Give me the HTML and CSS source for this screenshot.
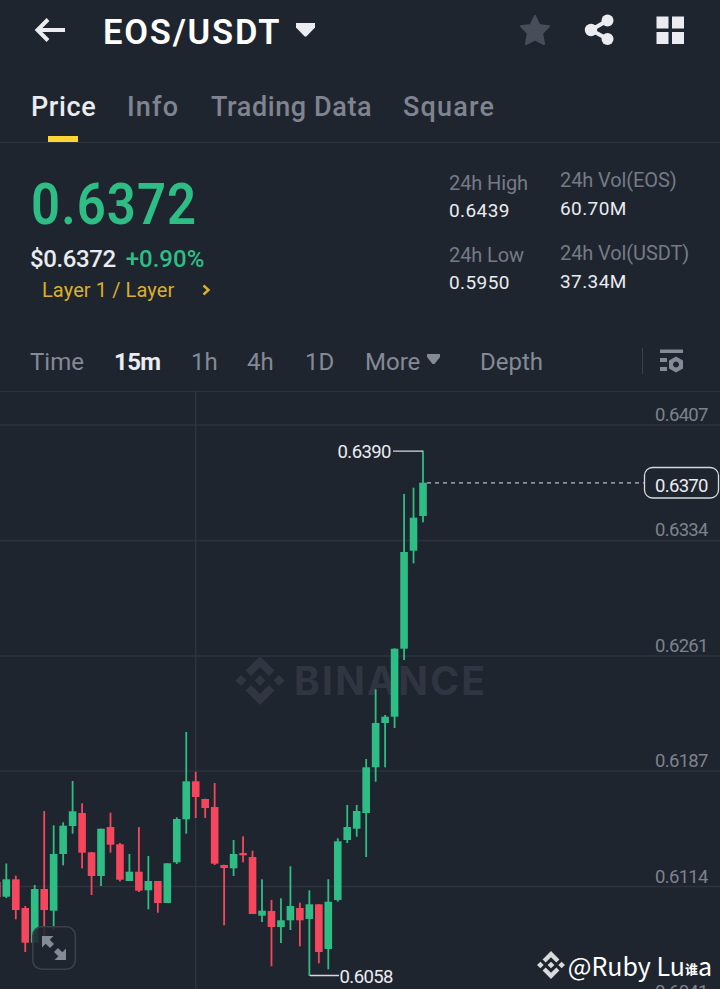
FILE: index.html
```
<!DOCTYPE html>
<html lang="en">
<head>
  <meta charset="UTF-8" />
  <meta name="viewport" content="width=device-width, initial-scale=1.0" />
  <title>EOS/USDT</title>
  <link rel="stylesheet" href="styles.css">
</head>
<body>
  <header class="topbar">
    <svg class="back" width="32" height="26" viewBox="0 0 32 26">
      <path d="M14 2.500L3.500 13L14 23.500M3.500 13H31" fill="none" stroke="#eaecef" stroke-width="4" />
    </svg>
    <h1>EOS/USDT</h1>
    <svg class="caret" width="19" height="15" viewBox="0 0 19 15">
      <path d="M0 0H19V4.500L10.300 13.500H8.700L0 4.500Z" fill="#eaecf2" />
    </svg>
    <div class="actions">
      <svg width="32" height="32" viewBox="0 0 32 32">
        <path d="M16 2L20.300 11L30 12.200L23.200 19.300L25 30L16 25.500L7 30L8.800 19.300L2 12.200L11.700 11Z" fill="#474d59" stroke="#474d59" stroke-width="2" stroke-linejoin="round" />
      </svg>
      <svg width="32" height="32" viewBox="0 0 32 32">
        <path d="M24.500 6.500L8 16L24.500 25" fill="none" stroke="#eaecf2" stroke-width="4" />
        <circle cx="24.500" cy="6.500" r="6" fill="#eaecf2" />
        <circle cx="8" cy="16" r="6.200" fill="#eaecf2" />
        <circle cx="24.500" cy="25" r="6" fill="#eaecf2" />
      </svg>
      <svg width="32" height="32" viewBox="0 0 32 32">
        <path d="M2.500 2.500h12v12h-12zM18 2.500h12v12h-12zM2.500 18h12v12h-12zM18 18h12v12h-12z" fill="#eaecf2" />
      </svg>
    </div>
  </header>

  <nav class="tabs">
    <a class="active">Price</a>
    <a class="wide">Info</a>
    <a>Trading Data</a>
    <a class="wide">Square</a>
  </nav>

  <section class="summary">
    <div class="quote">
      <div class="last">0.6372</div>
      <div class="sub"><span class="usd">$0.6372</span><span class="change">+0.90%</span></div>
      <div class="tag">
        <span>Layer 1 / Layer</span>
        <svg width="9" height="12" viewBox="0 0 9 12">
          <path d="M1.500 1.500L6.500 6L1.500 10.500" fill="none" stroke="#dcae2c" stroke-width="2.400" />
        </svg>
      </div>
    </div>
    <dl class="stats high-low">
      <dt>24h High</dt>
      <dd>0.6439</dd>
      <dt>24h Low</dt>
      <dd>0.5950</dd>
    </dl>
    <dl class="stats volume">
      <dt>24h Vol(EOS)</dt>
      <dd>60.70M</dd>
      <dt>24h Vol(USDT)</dt>
      <dd>37.34M</dd>
    </dl>
  </section>

  <nav class="intervals">
    <a>Time</a>
    <a class="active">15m</a>
    <a>1h</a>
    <a>4h</a>
    <a>1D</a>
    <a>More
      <svg width="13" height="11" viewBox="0 0 13 11"><path d="M0 0H13V3L7.500 10H5.500L0 3Z" fill="#848a96" /></svg>
    </a>
    <a>Depth</a>
    <div class="settings">
      <svg width="26" height="26" viewBox="0 0 26 26">
        <path d="M1 1.500h23v3.500H1zM1 10h7v4H1zM1 19h7v4H1z" fill="#848a96" />
        <path fill-rule="evenodd" d="M17 8.500L24 12.500V20.500L17 24.500L10 20.500V12.500ZM17 13.500a3 3 0 1 0 0.010 0Z" fill="#848a96" />
      </svg>
    </div>
  </nav>

  <main class="chart">
    <svg width="720" height="598" viewBox="0 391 720 598">
      <path class="grid" d="M0 425H720M0 540.500H720M0 656H720M0 771H720M0 886.500H720M195.700 391V989" />

      <g class="brand">
        <path d="M260 656L274.500 670.500L269 676L260 667L251 676L245.500 670.500ZM260 705L274.500 690.500L269 685L260 694L251 685L245.500 690.500ZM260 675L265.500 680.500L260 686L254.500 680.500ZM241 675L246.500 680.500L241 686L235.500 680.500ZM279 675L284.500 680.500L279 686L273.500 680.500Z" />
        <text x="294" y="694.500" textLength="191">BINANCE</text>
      </g>

      <g id="candles"></g>

      <path class="pointer" d="M393 451.200H423M310 975.500H339" />
      <path class="price-line" d="M427 482.800H644" />
      <text class="mark" x="337.500" y="458" textLength="54">0.6390</text>
      <text class="mark" x="339.500" y="982.500" textLength="54">0.6058</text>

      <g class="axis">
        <text x="655" y="421.300" textLength="53.500">0.6407</text>
        <text x="655" y="535.800" textLength="53.500">0.6334</text>
        <text x="655" y="651.800" textLength="53.500">0.6261</text>
        <text x="655" y="767" textLength="53.500">0.6187</text>
        <text x="655" y="883" textLength="53.500">0.6114</text>
        <text x="655" y="998" textLength="53.500">0.6041</text>
      </g>
      <rect class="price-box" x="644.500" y="467.500" width="74" height="30.500" rx="8" />
      <text class="price-now" x="655" y="492" textLength="53.500">0.6370</text>

      <g class="expand">
        <rect x="32.800" y="926.800" width="42.500" height="42.500" rx="9" />
        <path d="M42 936H53.500L49.700 939.700L54 944L50 948L45.700 943.700L42 947.500ZM66 960H54.500L58.300 956.300L54 952L58 948L62.300 952.300L66 948.500Z" />
      </g>
    </svg>

    <div class="watermark">
      <svg width="28" height="28" viewBox="0 0 50 50">
        <path d="M25 0L40 15L34.500 20.500L25 11L15.500 20.500L10 15ZM25 50L40 35L34.500 29.500L25 39L15.500 29.500L10 35ZM25 19L31 25L25 31L19 25ZM6 19L12 25L6 31L0 25ZM44 19L50 25L44 31L38 25Z" fill="#d9dadb" />
      </svg>
      <span>@Ruby Lu<small>谁</small>a</span>
    </div>
  </main>

  <script src="chart.js"></script>
</body>
</html>
```
FILE: styles.css
```
body, h1, dl, dt, dd {
  margin: 0;
  padding: 0;
}

body {
  width: 720px;
  height: 989px;
  overflow: hidden;
  background-color: #1f252f;
  color: #eaecef;
  font-family: Roboto, sans-serif;
}

svg {
  display: block;
}

.topbar {
  display: flex;
  align-items: center;
  box-sizing: border-box;
  height: 60px;
  padding: 0 34px;
}

.topbar h1 {
  width: 180px;
  margin: 3px 0 0 37px;
  font-size: 34.5px;
  font-weight: 600;
  letter-spacing: 1.8px;
  white-space: nowrap;
  color: #fff;
}

.caret {
  margin-left: 13px;
}

.actions {
  display: flex;
  gap: 32px;
  margin-left: auto;
}

.actions svg:last-child {
  margin-left: 7px;
}

.tabs {
  display: grid;
  grid-template-columns: 96px 84px 192px 120px;
  box-sizing: border-box;
  height: 83px;
  padding: 30px 0 0 31px;
  border-bottom: 1px solid #30363f;
  font-size: 27px;
  font-weight: 500;
  line-height: 34px;
  letter-spacing: 0.6px;
  white-space: nowrap;
  color: #7f8490;
}

.tabs .wide {
  letter-spacing: 1.2px;
}

.tabs .active {
  color: #eaecef;
}

.tabs .active::after {
  content: "";
  display: block;
  width: 30px;
  height: 6px;
  margin: 12px 0 0 17px;
  background-color: #fcd535;
}

.summary {
  display: flex;
  height: 189px;
  white-space: nowrap;
}

.quote {
  width: 418px;
  padding: 32px 0 0 31px;
}

.last {
  font-size: 56.5px;
  font-weight: 600;
  line-height: 60px;
  letter-spacing: 1.2px;
  transform: scaleX(0.9);
  transform-origin: left;
  color: #2ebd85;
}

.sub {
  display: flex;
  gap: 10px;
  margin: 9px 0 0 -1px;
  font-size: 24px;
  font-weight: 500;
  line-height: 30px;
  letter-spacing: -0.4px;
}

.change {
  letter-spacing: 0;
  color: #2ebd85;
}

.tag {
  display: flex;
  align-items: center;
  gap: 28px;
  padding-left: 11px;
  font-size: 20px;
  line-height: 32px;
  letter-spacing: 0.1px;
  color: #dcae2c;
}

.stats {
  font-size: 20px;
  line-height: 28px;
}

.stats dt {
  letter-spacing: -0.1px;
  color: #757b86;
}

.stats dd {
  margin-bottom: 16px;
  font-size: 19px;
  letter-spacing: 0.4px;
}

.high-low {
  width: 111px;
  padding-top: 26px;
}

.volume {
  padding-top: 23px;
}

.volume dd {
  padding-top: 1px;
}

.intervals {
  display: grid;
  grid-template-columns: 84px 77px 56px 58px 60px 115px 162px 60px;
  align-items: center;
  box-sizing: border-box;
  height: 60px;
  padding-left: 30px;
  border-bottom: 1px solid #2d333d;
  font-size: 24px;
  color: #848a96;
}

.intervals a {
  display: flex;
  align-items: center;
  gap: 7px;
}

.intervals .active {
  font-weight: 700;
  letter-spacing: -0.6px;
  color: #eaecef;
}

.intervals a svg {
  margin-top: -4px;
}

.settings {
  margin-top: -2px;
  padding-left: 16px;
  border-left: 1px solid #3b414c;
}

.chart {
  position: relative;
  margin-top: -1px;
}

.grid {
  fill: none;
  stroke: #2d333d;
  stroke-width: 1.5;
}

.brand {
  fill: #303541;
  font: 700 39px Inter, sans-serif;
}

.up {
  fill: #2ebd85;
}

.down {
  fill: #f6465d;
}

.pointer {
  fill: none;
  stroke: #d5d8de;
  stroke-width: 1.3;
}

.price-line {
  stroke: #b7bbc3;
  stroke-width: 1.3;
  stroke-dasharray: 4 4;
}

.mark, .price-now {
  fill: #eaecef;
  font-size: 18.5px;
}

.axis {
  fill: #7d828d;
  font-size: 18.5px;
}

.price-box {
  fill: #1f252f;
  stroke: #d5d8de;
  stroke-width: 1.3;
}

.expand rect {
  fill: #1f252f;
  fill-opacity: 0.88;
  stroke: #3b404b;
  stroke-width: 1.6;
}

.expand path {
  fill: #848a96;
}

.watermark {
  position: absolute;
  right: 8px;
  bottom: 9px;
  display: flex;
  align-items: center;
  gap: 3px;
  color: #fff;
  font-family: "Noto Sans CJK SC", sans-serif;
  font-size: 25px;
  line-height: 30px;
  white-space: nowrap;
}

.watermark small {
  font-size: 13px;
  font-weight: 700;
  vertical-align: 2px;
  line-height: 1;
}
```
FILE: chart.js
```
// [wick top, body top, body bottom, wick bottom, up]
const candles = [
  [882, 882, 897, 897, 0],
  [863.5, 879.3, 896.7, 898, 1],
  [875.7, 879.3, 910, 919.3, 0],
  [906, 908, 942.7, 952, 0],
  [885, 889, 942.7, 942.7, 1],
  [811, 889, 910, 938, 0],
  [825.3, 854, 910.7, 930, 1],
  [822.3, 825.7, 854, 865.3, 1],
  [781, 811.3, 826, 833.7, 1],
  [803.3, 813, 852.7, 868.3, 0],
  [852, 852.3, 876, 895, 0],
  [828.7, 828.7, 876, 886, 1],
  [812.7, 827, 844.7, 852.7, 0],
  [843, 844.3, 879.7, 881.3, 0],
  [854, 871.7, 881, 881, 1],
  [827, 871.7, 890.7, 892, 0],
  [856, 881, 890.3, 909.3, 1],
  [881, 881, 903, 912.7, 0],
  [863.3, 863.3, 903, 903, 1],
  [817.3, 819, 862.3, 864, 1],
  [732, 781.3, 819.3, 833.7, 1],
  [771.7, 781.3, 797, 818, 0],
  [798.7, 799, 808, 818, 0],
  [783, 807, 863.7, 865, 0],
  [864.7, 865, 868, 925.3, 0],
  [840, 854, 868.3, 876, 1],
  [836.3, 853, 855.3, 862.3, 0],
  [850.7, 857, 914, 914, 0],
  [879.3, 910.7, 915.7, 922, 1],
  [900, 911, 927, 966.3, 0],
  [898.3, 920.3, 927, 943, 1],
  [866.3, 906, 920.3, 930, 1],
  [902.7, 908, 920.3, 946.3, 0],
  [890.3, 904.3, 919, 976, 1],
  [904.3, 904.3, 952, 963.3, 0],
  [879.3, 901.7, 949, 969.3, 1],
  [838.3, 841.3, 900, 901.7, 1],
  [805, 827, 840, 843, 1],
  [805, 811, 828.7, 836.7, 1],
  [759, 767.3, 813, 857, 1],
  [689.3, 723, 767.3, 781.7, 1],
  [715, 716.7, 723, 767.3, 1],
  [648.3, 648.7, 716.7, 728, 1],
  [494, 552, 648.7, 660, 1],
  [487.7, 517.7, 550.7, 563.3, 1],
  [450.7, 482.7, 516, 522.3, 1]
];

const STEP = 9.47;
const group = document.getElementById("candles");

function addRect(x, y, width, height, cls) {
  const rect = document.createElementNS("http://www.w3.org/2000/svg", "rect");
  rect.setAttribute("x", x);
  rect.setAttribute("y", y);
  rect.setAttribute("width", width);
  rect.setAttribute("height", height);
  rect.setAttribute("class", cls);
  group.appendChild(rect);
}

candles.forEach(function (c, i) {
  const x = 423 - (candles.length - 1 - i) * STEP;
  const cls = c[4] ? "up" : "down";
  addRect(x - 0.9, c[0], 1.8, c[3] - c[0], cls);
  addRect(x - 3.8, c[1], 7.6, c[2] - c[1], cls);
});
```
